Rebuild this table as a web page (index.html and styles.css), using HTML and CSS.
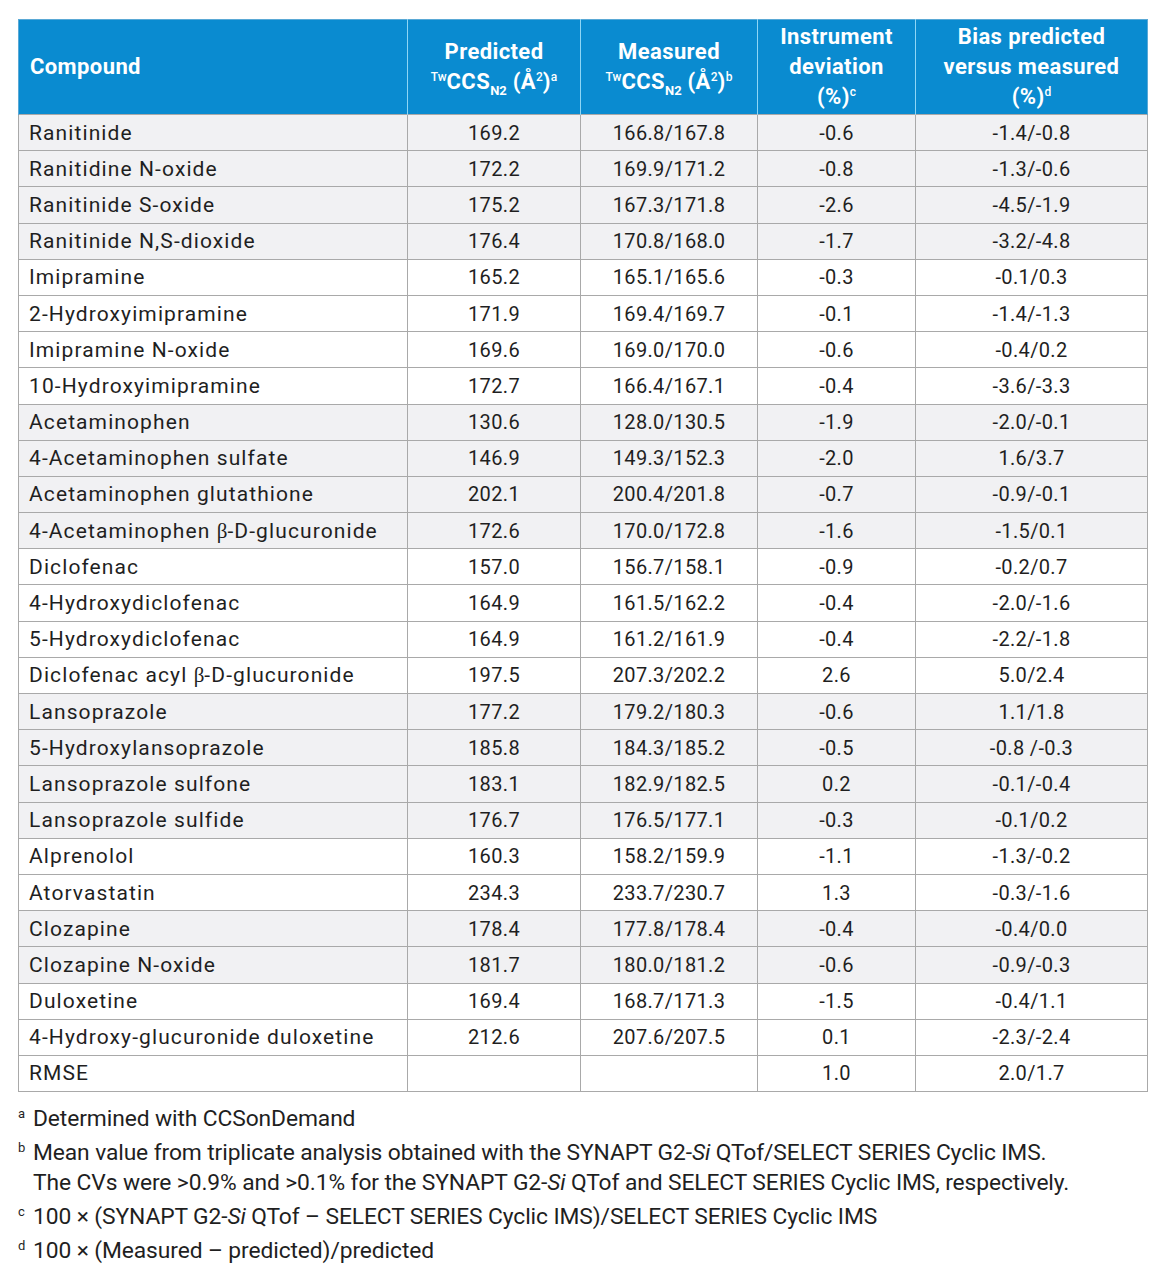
FILE: index.html
```html
<!DOCTYPE html>
<html>
<head>
<meta charset="utf-8">
<link rel="stylesheet" href="styles.css">
</head>
<body>
<div class="page">
<table class="data">
<colgroup>
<col class="c1"><col class="c2"><col class="c3"><col class="c4"><col class="c5">
</colgroup>
<thead>
<tr>
<th class="left">Compound</th>
<th>Predicted<br><span class="sup">Tw</span>CCS<span class="sub">N2</span> (Å<span class="sup">2</span>)<span class="sup">a</span></th>
<th>Measured<br><span class="sup">Tw</span>CCS<span class="sub">N2</span> (Å<span class="sup">2</span>)<span class="sup">b</span></th>
<th>Instrument<br>deviation<br>(%)<span class="sup">c</span></th>
<th>Bias predicted<br>versus measured<br>(%)<span class="sup">d</span></th>
</tr>
</thead>
<tbody>
<tr class="g"><td>Ranitinide</td><td>169.2</td><td>166.8/167.8</td><td>-0.6</td><td>-1.4/-0.8</td></tr>
<tr class="g"><td>Ranitidine N-oxide</td><td>172.2</td><td>169.9/171.2</td><td>-0.8</td><td>-1.3/-0.6</td></tr>
<tr class="g"><td>Ranitinide S-oxide</td><td>175.2</td><td>167.3/171.8</td><td>-2.6</td><td>-4.5/-1.9</td></tr>
<tr class="g"><td>Ranitinide N,S-dioxide</td><td>176.4</td><td>170.8/168.0</td><td>-1.7</td><td>-3.2/-4.8</td></tr>
<tr><td>Imipramine</td><td>165.2</td><td>165.1/165.6</td><td>-0.3</td><td>-0.1/0.3</td></tr>
<tr><td>2-Hydroxyimipramine</td><td>171.9</td><td>169.4/169.7</td><td>-0.1</td><td>-1.4/-1.3</td></tr>
<tr><td>Imipramine N-oxide</td><td>169.6</td><td>169.0/170.0</td><td>-0.6</td><td>-0.4/0.2</td></tr>
<tr><td>10-Hydroxyimipramine</td><td>172.7</td><td>166.4/167.1</td><td>-0.4</td><td>-3.6/-3.3</td></tr>
<tr class="g"><td>Acetaminophen</td><td>130.6</td><td>128.0/130.5</td><td>-1.9</td><td>-2.0/-0.1</td></tr>
<tr class="g"><td>4-Acetaminophen sulfate</td><td>146.9</td><td>149.3/152.3</td><td>-2.0</td><td>1.6/3.7</td></tr>
<tr class="g"><td>Acetaminophen glutathione</td><td>202.1</td><td>200.4/201.8</td><td>-0.7</td><td>-0.9/-0.1</td></tr>
<tr class="g"><td>4-Acetaminophen <span class="greek">β</span>-D-glucuronide</td><td>172.6</td><td>170.0/172.8</td><td>-1.6</td><td>-1.5/0.1</td></tr>
<tr><td>Diclofenac</td><td>157.0</td><td>156.7/158.1</td><td>-0.9</td><td>-0.2/0.7</td></tr>
<tr><td>4-Hydroxydiclofenac</td><td>164.9</td><td>161.5/162.2</td><td>-0.4</td><td>-2.0/-1.6</td></tr>
<tr><td>5-Hydroxydiclofenac</td><td>164.9</td><td>161.2/161.9</td><td>-0.4</td><td>-2.2/-1.8</td></tr>
<tr><td>Diclofenac acyl <span class="greek">β</span>-D-glucuronide</td><td>197.5</td><td>207.3/202.2</td><td>2.6</td><td>5.0/2.4</td></tr>
<tr class="g"><td>Lansoprazole</td><td>177.2</td><td>179.2/180.3</td><td>-0.6</td><td>1.1/1.8</td></tr>
<tr class="g"><td>5-Hydroxylansoprazole</td><td>185.8</td><td>184.3/185.2</td><td>-0.5</td><td>-0.8 /-0.3</td></tr>
<tr class="g"><td>Lansoprazole sulfone</td><td>183.1</td><td>182.9/182.5</td><td>0.2</td><td>-0.1/-0.4</td></tr>
<tr class="g"><td>Lansoprazole sulfide</td><td>176.7</td><td>176.5/177.1</td><td>-0.3</td><td>-0.1/0.2</td></tr>
<tr><td>Alprenolol</td><td>160.3</td><td>158.2/159.9</td><td>-1.1</td><td>-1.3/-0.2</td></tr>
<tr><td>Atorvastatin</td><td>234.3</td><td>233.7/230.7</td><td>1.3</td><td>-0.3/-1.6</td></tr>
<tr class="g"><td>Clozapine</td><td>178.4</td><td>177.8/178.4</td><td>-0.4</td><td>-0.4/0.0</td></tr>
<tr class="g"><td>Clozapine N-oxide</td><td>181.7</td><td>180.0/181.2</td><td>-0.6</td><td>-0.9/-0.3</td></tr>
<tr><td>Duloxetine</td><td>169.4</td><td>168.7/171.3</td><td>-1.5</td><td>-0.4/1.1</td></tr>
<tr><td>4-Hydroxy-glucuronide duloxetine</td><td>212.6</td><td>207.6/207.5</td><td>0.1</td><td>-2.3/-2.4</td></tr>
<tr><td>RMSE</td><td></td><td></td><td>1.0</td><td>2.0/1.7</td></tr>
</tbody>
</table>
<div class="notes">
<p><span class="fn">a</span>Determined with CCSonDemand</p>
<p><span class="fn">b</span>Mean value from triplicate analysis obtained with the SYNAPT G2-<i>Si</i> QTof/SELECT SERIES Cyclic IMS.<br>The CVs were &gt;0.9% and &gt;0.1% for the SYNAPT G2-<i>Si</i> QTof and SELECT SERIES Cyclic IMS, respectively.</p>
<p><span class="fn">c</span>100 × (SYNAPT G2-<i>Si</i> QTof – SELECT SERIES Cyclic IMS)/SELECT SERIES Cyclic IMS</p>
<p><span class="fn">d</span>100 × (Measured – predicted)/predicted</p>
</div>
</div>
</body>
</html>
```
FILE: styles.css
```css
html, body {
  margin: 0;
  padding: 0;
  background: #ffffff;
}
.page {
  padding: 19px 18px 0 18px;
  font-family: Roboto, "Liberation Sans", sans-serif;
  color: #1f1f1f;
}
.data {
  width: 1129px;
  border-collapse: collapse;
  table-layout: fixed;
  font-size: 20px;
  letter-spacing: 0.35px;
}
.c1 { width: 389px; }
.c2 { width: 173px; }
.c3 { width: 177px; }
.c4 { width: 158px; }
.c5 { width: 232px; }
.data thead th {
  background: #0a8bd0;
  color: #ffffff;
  font-weight: 700;
  font-size: 22px;
  line-height: 30px;
  height: 95px;
  padding: 0 4px;
  text-align: center;
  vertical-align: middle;
  letter-spacing: 0.4px;
  border-left: 1px solid #8fd6f5;
  border-right: 1px solid #8fd6f5;
  border-top: 1px solid #5aa9d6;
  box-sizing: border-box;
}
.data thead th:first-child { border-left: 1px solid #5aa9d6; }
.data thead th:last-child { border-right: 1px solid #5aa9d6; }
.data thead th.left {
  text-align: left;
  padding-left: 11px;
}
.sup {
  font-size: 12px;
  vertical-align: 8px;
  line-height: 0;
  font-weight: 500;
  letter-spacing: 0;
}
.sub {
  font-size: 13px;
  vertical-align: -6px;
  line-height: 0;
  letter-spacing: 0;
}
.data td {
  height: 35.2px;
  padding: 0 6px;
  border: 1.5px solid #a9a9a9;
  text-align: center;
  vertical-align: middle;
  line-height: 24px;
  white-space: nowrap;
}
.data td:first-child {
  text-align: left;
  padding-left: 10px;
  font-size: 21px;
  letter-spacing: 1.1px;
}
.data tr.g td {
  background: #f1f1f3;
}
.greek {
  font-family: "Liberation Serif", serif;
  letter-spacing: 0;
}
.notes {
  margin-top: 12px;
  font-size: 22.8px;
  line-height: 30px;
  letter-spacing: -0.1px;
}
.notes p {
  margin: 0 0 4px 0;
  padding-left: 15px;
  text-indent: -15px;
}
.fn {
  display: inline-block;
  width: 15px;
  text-indent: 0;
  font-size: 13px;
  vertical-align: 8px;
  line-height: 0;
  text-align: left;
}
```
